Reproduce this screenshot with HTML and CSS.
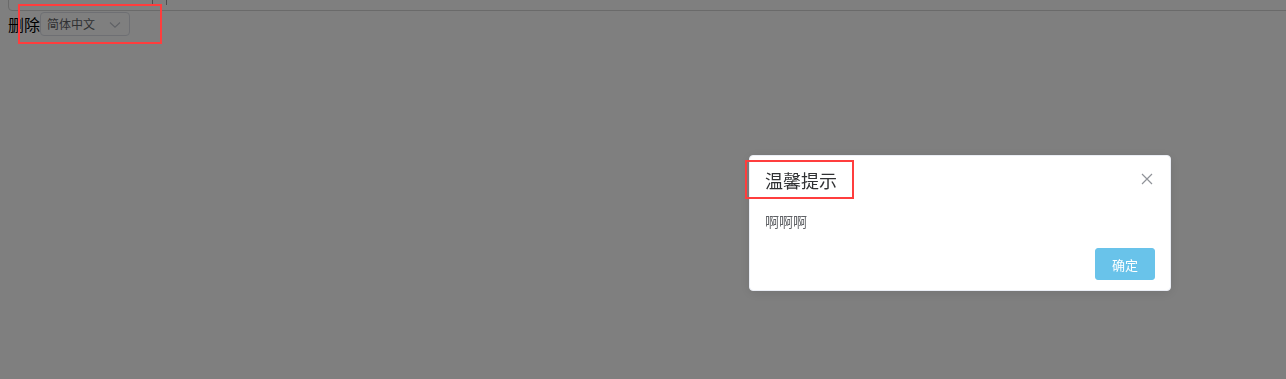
FILE: index.html
```html
<!DOCTYPE html>
<html lang="zh-CN">
<head>
<meta charset="utf-8">
<title>温馨提示</title>
<link rel="stylesheet" href="styles.css">
</head>
<body>
  <div class="page">
    <div class="top-box">
      <span class="tick tick-a"></span>
      <span class="tick tick-b"></span>
    </div>
    <div class="row">
      <span class="del">删除</span>
      <div class="select">
        <span class="select-text">简体中文</span>
        <svg class="arrow" width="12" height="8" viewBox="0 0 12 8"><polyline points="1,1.5 6,6.2 11,1.5" fill="none" stroke="#c0c4cc" stroke-width="1.2"/></svg>
      </div>
    </div>
  </div>

  <div class="mask"></div>

  <div class="msgbox">
    <div class="msgbox-header">
      <span class="msgbox-title">温馨提示</span>
      <button class="msgbox-close" aria-label="关闭">
        <svg width="16" height="16" viewBox="0 0 16 16"><path d="M3 3 L13 13 M13 3 L3 13" stroke="#909399" stroke-width="1.2" fill="none"/></svg>
      </button>
    </div>
    <div class="msgbox-content">啊啊啊</div>
    <div class="msgbox-btns">
      <button class="btn-primary">确定</button>
    </div>
  </div>

  <div class="mark mark-1"></div>
  <div class="mark mark-2"></div>
</body>
</html>
```

FILE: styles.css
```css
html, body {
  margin: 0;
  padding: 0;
  overflow: hidden;
  width: 1286px;
  height: 379px;
  background: #fff;
  font-family: "Noto Sans CJK SC", "Liberation Sans", sans-serif;
}

.page {
  padding: 0 0 0 8px;
}

.top-box {
  margin-top: -27px;
  height: 38px;
  width: 1300px;
  border: 1px solid #d4d4d4;
  border-radius: 4px;
  box-sizing: border-box;
  display: flex;
  align-items: flex-end;
  padding-bottom: 5px;
}

.tick {
  display: block;
  width: 1px;
  height: 5px;
  background: #9a9a9a;
}
.tick-a { margin-left: 143px; }
.tick-b { margin-left: 13px; }

.row {
  display: flex;
  align-items: center;
  margin-top: 1px;
  height: 24px;
}

.del {
  font-size: 16px;
  line-height: 24px;
  color: #000;
  width: 32px;
}

.select {
  box-sizing: border-box;
  width: 90px;
  height: 24px;
  border: 1px solid #dcdfe6;
  border-radius: 4px;
  display: flex;
  align-items: center;
  justify-content: space-between;
  padding: 0 8px 0 6px;
}

.select-text {
  font-size: 12px;
  line-height: 16px;
  color: #606266;
}

.arrow {
  display: block;
  margin-top: 1px;
}

.mask {
  position: fixed;
  inset: 0;
  background: rgba(0, 0, 0, 0.5);
}

.msgbox {
  position: fixed;
  left: 749px;
  top: 155px;
  width: 422px;
  box-sizing: border-box;
  background: #fff;
  border: 1px solid #ebeef5;
  border-radius: 4px;
  box-shadow: 0 2px 12px 0 rgba(0, 0, 0, 0.1);
  padding-bottom: 10px;
}

.msgbox-header {
  position: relative;
  padding: 15px 15px 10px;
}

.msgbox-title {
  display: block;
  font-size: 18px;
  line-height: 18px;
  color: #303133;
}

.msgbox-close {
  position: absolute;
  top: 15px;
  right: 15px;
  width: 16px;
  height: 16px;
  padding: 0;
  border: none;
  background: none;
}
.msgbox-close svg { display: block; }

.msgbox-content {
  padding: 10px 15px;
  font-size: 14px;
  line-height: 24px;
  color: #606266;
}

.msgbox-btns {
  padding: 5px 15px 0;
  display: flex;
  justify-content: flex-end;
}

.btn-primary {
  width: 60px;
  height: 32px;
  border: 1px solid #69c3ea;
  background: #69c3ea;
  color: #fff;
  border-radius: 3px;
  font-family: "Noto Sans CJK SC", "Liberation Sans", sans-serif;
  font-size: 13px;
  line-height: 1;
  padding: 0;
}

.mark {
  position: fixed;
  border: 2px solid #ff3d3d;
  box-sizing: border-box;
}
.mark-1 {
  left: 18px;
  top: 4px;
  width: 144px;
  height: 40px;
}
.mark-2 {
  left: 745px;
  top: 160px;
  width: 109px;
  height: 39px;
}
```
